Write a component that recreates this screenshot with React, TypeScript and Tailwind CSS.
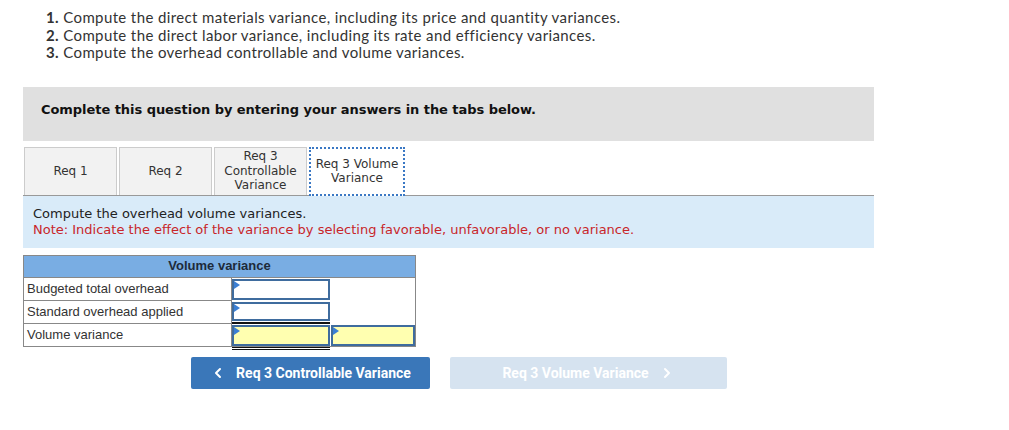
import { ChevronLeft, ChevronRight } from 'lucide-react'

const verdana = { fontFamily: '"DejaVu Sans", Verdana, sans-serif' }

function Arrow() {
  return (
    <span className="absolute left-0 top-0 w-0 h-0 border-t-[4px] border-b-[4px] border-l-[6px] border-t-transparent border-b-transparent border-l-[#3b7fd4]" />
  )
}

function InputCell({ yellow }: { yellow?: boolean }) {
  return (
    <div className={`relative h-full border-2 border-[#3f6c9e] ${yellow ? 'bg-[#ffffb0]' : 'bg-white'}`}>
      <Arrow />
    </div>
  )
}

export default function App() {
  const tabs = ['Req 1', 'Req 2', 'Req 3\nControllable\nVariance']

  return (
    <div className="w-[1009px] h-[430px] bg-white relative text-[#222]">
      {/* requirement list */}
      <div className="pt-[9px] pl-[46px] text-[15px] leading-[17.5px] tracking-[0.38px] text-[#333]" style={{ fontFamily: 'Lato, sans-serif' }}>
        <p><b>1.</b> Compute the direct materials variance, including its price and quantity variances.</p>
        <p><b>2.</b> Compute the direct labor variance, including its rate and efficiency variances.</p>
        <p><b>3.</b> Compute the overhead controllable and volume variances.</p>
      </div>

      <div className="ml-[23px] w-[851px] mt-[25px]">
        <div className="h-[54px] bg-[#e0e0e0] pl-[18px] pt-[13px] text-[13px] font-bold tracking-[-0.05px] text-[#111]" style={verdana}>
          Complete this question by entering your answers in the tabs below.
        </div>

        {/* tabs */}
        <div className="mt-[6px] flex items-end gap-[2px] pl-[1px] border-b border-[#999] h-[49px]" style={verdana}>
          {tabs.map(t => (
            <div key={t} className="w-[93px] h-[48px] bg-[#f2f2f2] border border-b-0 border-[#ccc] flex items-center justify-center text-center text-[12px] leading-[14.5px] text-[#333] whitespace-pre-line">
              {t}
            </div>
          ))}
          <div className="w-[96px] h-[49px] -mb-px bg-white border-2 border-dotted border-[#3a78c4] flex items-center justify-center text-center text-[12px] leading-[14.5px] text-[#333]">
            Req 3 Volume<br />Variance
          </div>
        </div>

        <div className="h-[52px] bg-[#d9ebf9] pl-[10px] pt-[10px] text-[13px] leading-[16px]" style={verdana}>
          <p className="text-[#222]">Compute the overhead volume variances.</p>
          <p className="text-[#c8262a]">Note: Indicate the effect of the variance by selecting favorable, unfavorable, or no variance.</p>
        </div>

        {/* table */}
        <div className="mt-[7px] w-[393px] border border-[#888] text-[13px] text-[#333]" style={{ fontFamily: '"Liberation Sans", Arial, sans-serif' }}>
          <div className="h-[22px] bg-[#79ade3] flex items-center justify-center font-bold text-[13px] text-[#1d2a3a] border-b border-[#888]">
            Volume variance
          </div>
          <div className="grid grid-cols-[208px_98px_85px]">
            <div className="h-[23px] flex items-center pl-[3px] border-b border-r border-[#888]">Budgeted total overhead</div>
            <div className="h-[23px] py-px"><InputCell /></div>
            <div className="h-[23px]" />
            <div className="h-[23px] flex items-center pl-[3px] border-b border-r border-[#888]">Standard overhead applied</div>
            <div className="h-[23px] py-px border-b-2 border-[#111]"><InputCell /></div>
            <div className="h-[23px]" />
            <div className="h-[22px] flex items-center pl-[3px] border-r border-[#888]">Volume variance</div>
            <div className="h-[22px] pt-px"><InputCell yellow /></div>
            <div className="h-[22px] pt-px pl-px"><InputCell yellow /></div>
          </div>
        </div>
        <div className="ml-[209px] w-[98px] h-[3px] border-b-[3px] border-double border-[#111]" />
      </div>

      {/* nav buttons */}
      <div className="absolute top-[357px] left-[191px] flex gap-[20px]" style={{ fontFamily: 'Roboto, sans-serif' }}>
        <button className="w-[239px] h-[32px] rounded-[2px] bg-[#3a77b9] text-white font-bold text-[14px] flex items-center justify-center gap-[10px]">
          <ChevronLeft size={16} strokeWidth={3} />
          Req 3 Controllable Variance
        </button>
        <button className="w-[277px] h-[32px] rounded-[2px] bg-[#d6e3f0] text-white font-bold text-[14px] flex items-center justify-center gap-[10px]">
          Req 3 Volume Variance
          <ChevronRight size={16} strokeWidth={3} />
        </button>
      </div>
    </div>
  )
}
